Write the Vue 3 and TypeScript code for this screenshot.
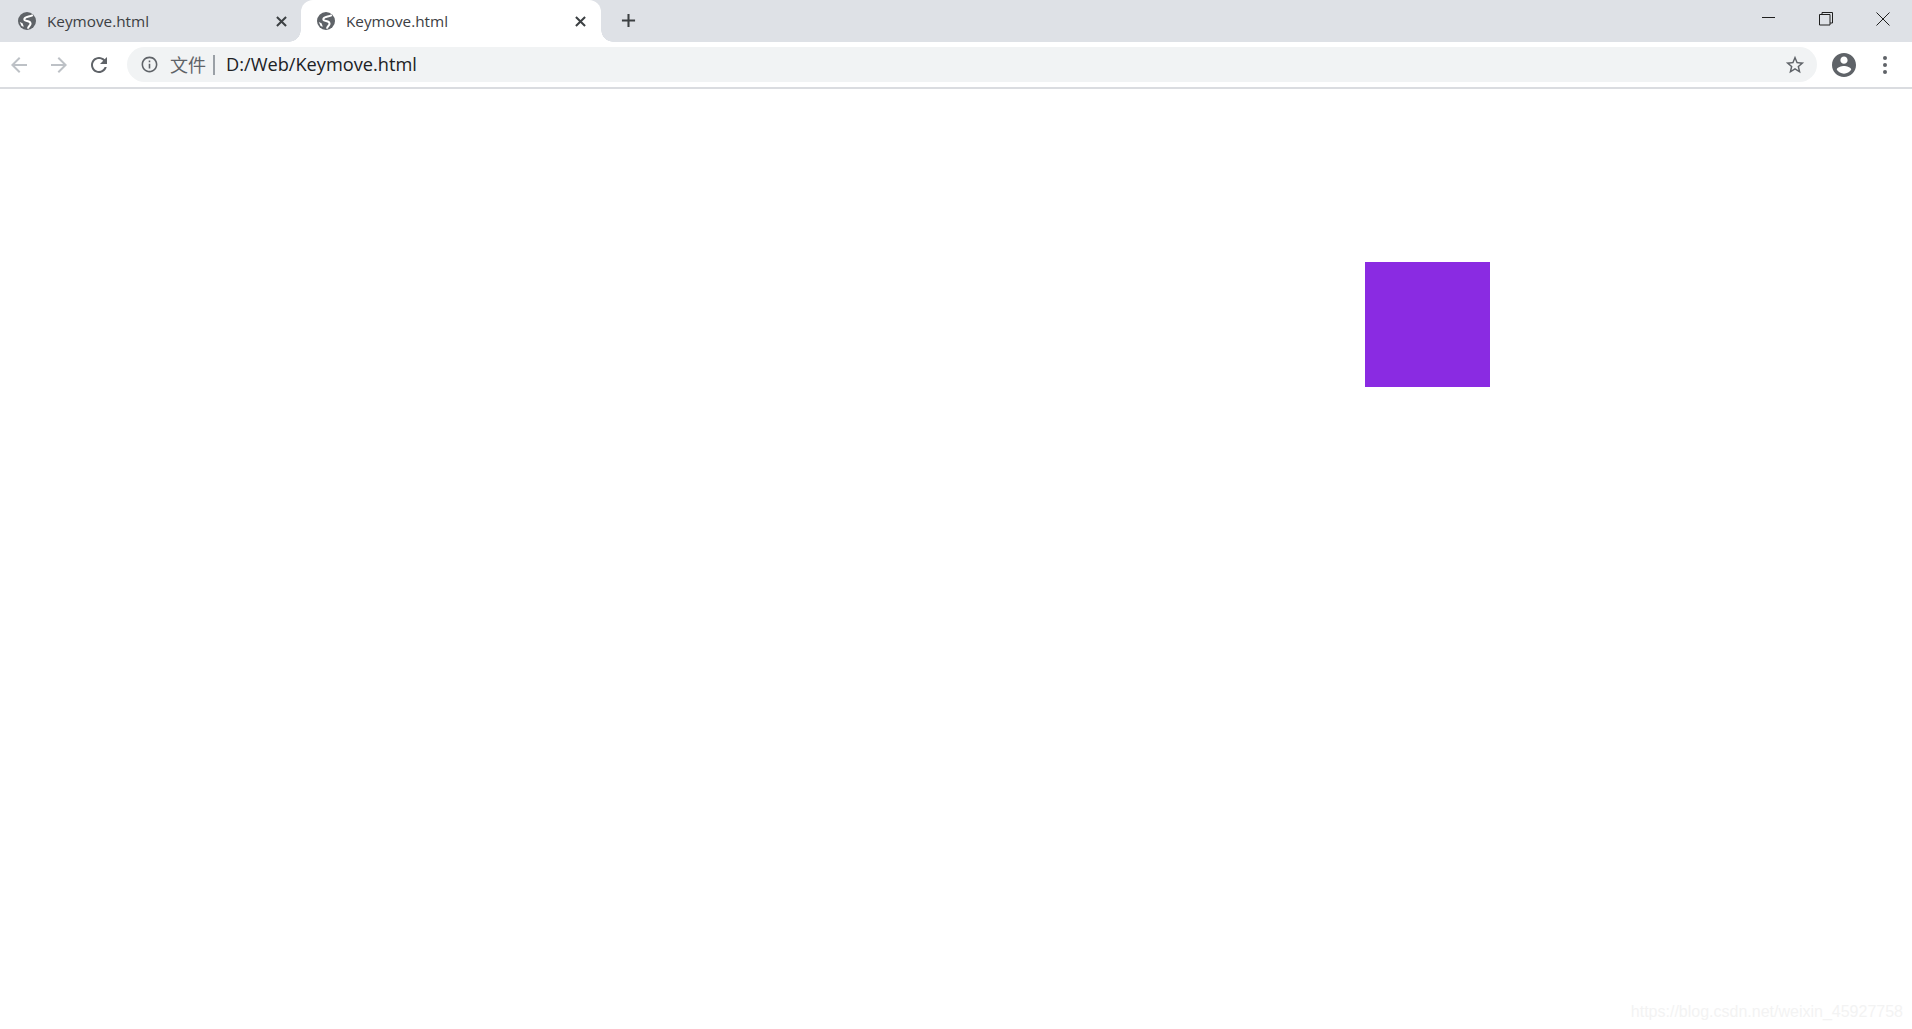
<script setup lang="ts">
const tabs = [
  { title: 'Keymove.html', active: false },
  { title: 'Keymove.html', active: true },
]
</script>

<template>
  <div class="browser">
    <header class="strip">
      <div v-for="(tab, i) in tabs" :key="i" class="tab" :class="{ active: tab.active }">
        <svg class="favicon" viewBox="2 2 20 20"><circle cx="12" cy="12" r="10" fill="#5f6368" /><path d="M18.500 5.500C15 7.500 9 7 9 10C9 13 16 11 16 15C16 17 13.500 17.500 13 20.500" fill="none" stroke="#fff" stroke-width="2.200" /><path d="M4 13L7 14.500L8.500 18.500L6 17.500z" fill="#fff" /></svg>
        <span class="tab-title">{{ tab.title }}</span>
        <svg class="tab-close" viewBox="0 0 12 12"><path d="M1 1l10 10M11 1L1 11" /></svg>
      </div>
      <svg class="new-tab" viewBox="0 0 16 16"><path d="M8 1v14M1 8h14" /></svg>
      <div class="win-controls">
        <svg class="win" viewBox="0 0 14 14"><path d="M0 5.500h13" /></svg>
        <svg class="win" viewBox="0 0 14 14"><path d="M.5 2.500h10.500v10.500H.5zM3 2.500V.5h10.500V11h-2.500" /></svg>
        <svg class="win" viewBox="0 0 14 14"><path d="M.5.5l13 13M13.500.5l-13 13" /></svg>
      </div>
    </header>
    <nav class="toolbar">
      <svg class="nav-icon disabled" viewBox="0 0 24 24"><path d="M20 11H7.830l5.590-5.590L12 4l-8 8 8 8 1.410-1.410L7.830 13H20v-2z" /></svg>
      <svg class="nav-icon disabled" viewBox="0 0 24 24"><path d="M4 11h12.170l-5.590-5.590L12 4l8 8-8 8-1.410-1.410L16.170 13H4v-2z" /></svg>
      <svg class="nav-icon reload" viewBox="0 0 24 24"><path d="M17.650 6.350C16.200 4.900 14.210 4 12 4c-4.420 0-7.990 3.580-7.990 8s3.570 8 7.990 8c3.730 0 6.840-2.550 7.730-6h-2.080c-.82 2.330-3.040 4-5.650 4-3.310 0-6-2.690-6-6s2.690-6 6-6c1.660 0 3.140.69 4.220 1.780L13 11h7V4l-2.350 2.350z" /></svg>
      <div class="omnibox">
        <svg class="info" viewBox="0 0 24 24"><path d="M11 7h2v2h-2zm0 4h2v6h-2zm1-9C6.480 2 2 6.480 2 12s4.480 10 10 10 10-4.480 10-10S17.520 2 12 2zm0 18c-4.410 0-8-3.590-8-8s3.590-8 8-8 8 3.590 8 8-3.590 8-8 8z" /></svg>
        <span class="scheme">文件</span>
        <span class="divider"></span>
        <span class="url">D:/Web/Keymove.html</span>
        <svg class="star" viewBox="0 0 24 24"><path d="M22 9.240l-7.190-.62L12 2 9.190 8.630 2 9.240l5.460 4.730L5.820 21 12 17.270 18.180 21l-1.630-7.030L22 9.240zM12 15.400l-3.760 2.270 1-4.280-3.320-2.880 4.380-.38L12 6.100l1.710 4.040 4.380.38-3.320 2.880 1 4.280L12 15.400z" /></svg>
      </div>
      <svg class="avatar" viewBox="2 2 20 20"><path d="M12 2C6.480 2 2 6.480 2 12s4.480 10 10 10 10-4.480 10-10S17.520 2 12 2zm0 3c1.660 0 3 1.340 3 3s-1.340 3-3 3-3-1.340-3-3 1.340-3 3-3zm0 14.200c-2.500 0-4.710-1.280-6-3.220.03-1.990 4-3.080 6-3.080 1.990 0 5.970 1.090 6 3.080-1.290 1.940-3.500 3.220-6 3.220z" /></svg>
      <div class="menu"><i></i><i></i><i></i></div>
    </nav>
    <main class="page">
      <div class="box"></div>
      <span class="watermark">https://blog.csdn.net/weixin_45927758</span>
    </main>
  </div>
</template>

<style scoped>
.browser {
  height: 1029px;
  display: flex;
  flex-direction: column;
  overflow: hidden;
  font-family: "Open Sans", "Noto Sans CJK SC", sans-serif;
  background: #fff;
}
.strip {
  height: 42px;
  flex: none;
  display: flex;
  align-items: stretch;
  background: #dee1e6;
}
.tab {
  position: relative;
  width: 300px;
  display: flex;
  align-items: center;
  padding-left: 18px;
  box-sizing: border-box;
  color: #3c4043;
}
.tab + .tab { margin-left: 1px; padding-left: 16px; }
.tab.active {
  background: #fff;
  border-radius: 12px 12px 0 0;
}
.tab.active .tab-close { margin-right: 15px; }
.tab.active::before,
.tab.active::after {
  content: "";
  position: absolute;
  bottom: 0;
  width: 12px;
  height: 12px;
}
.tab.active::before {
  left: -12px;
  background: radial-gradient(circle at 0 0, transparent 11.500px, #fff 12px);
}
.tab.active::after {
  right: -12px;
  background: radial-gradient(circle at 100% 0, transparent 11.500px, #fff 12px);
}
.favicon { width: 18px; height: 18px; flex: none; }
.tab-title {
  margin-left: 11px;
  font-size: 15.300px;
  flex: 1;
  white-space: nowrap;
}
.tab-close {
  width: 11px;
  height: 11px;
  margin-right: 13px;
  fill: none;
  stroke: #3c4043;
  stroke-width: 2.200;
}
.new-tab {
  width: 15px;
  height: 15px;
  margin: 13px 0 0 20px;
  fill: none;
  stroke: #3c4043;
  stroke-width: 2.200;
}
.win-controls {
  margin-left: auto;
  margin-right: 22px;
  display: flex;
  gap: 43px;
  padding-top: 12px;
}
.win {
  width: 14px;
  height: 14px;
  fill: none;
  stroke: #1f1f1f;
  stroke-width: 1;
}
.toolbar {
  height: 45px;
  flex: none;
  display: flex;
  align-items: center;
  padding: 0 0 0 7px;
  background: #fff;
  border-bottom: 2px solid #dadce0;
  box-sizing: content-box;
}
.nav-icon {
  width: 24px;
  height: 24px;
  margin-right: 16px;
  flex: none;
}
.nav-icon.disabled { fill: #bdc1c6; }
.nav-icon.reload { fill: #5f6368; margin-right: 0; }
.omnibox {
  width: 1690px;
  height: 35px;
  margin-left: 16px;
  flex: none;
  display: flex;
  align-items: center;
  box-sizing: border-box;
  padding: 0 11px 0 13px;
  background: #f1f3f4;
  border-radius: 18px;
}
.info { width: 19px; height: 19px; fill: #5f6368; flex: none; }
.scheme { margin-left: 11px; margin-top: -2px; font-size: 18px; color: #5f6368; }
.divider { width: 2px; height: 20px; margin: 0 11px 0 7px; background: #9aa0a6; }
.url { font-size: 18.200px; color: #202124; flex: 1; margin-top: -2px; }
.star { width: 22px; height: 22px; fill: #5f6368; flex: none; }
.avatar { width: 24px; height: 24px; margin-left: 15px; fill: #5f6368; flex: none; }
.menu {
  margin-left: 27px;
  display: flex;
  flex-direction: column;
  gap: 3px;
}
.menu i { width: 4px; height: 4px; border-radius: 50%; background: #5f6368; display: block; }
.page {
  position: relative;
  flex: 1;
  background: #fff;
}
.box {
  position: absolute;
  left: 1365px;
  top: 173px;
  width: 125px;
  height: 125px;
  background: #8a2be2;
}
.watermark {
  position: absolute;
  right: 9px;
  bottom: 8px;
  font-family: "Liberation Sans", sans-serif;
  font-size: 16px;
  color: #f3f3f3;
  white-space: nowrap;
}
</style>
